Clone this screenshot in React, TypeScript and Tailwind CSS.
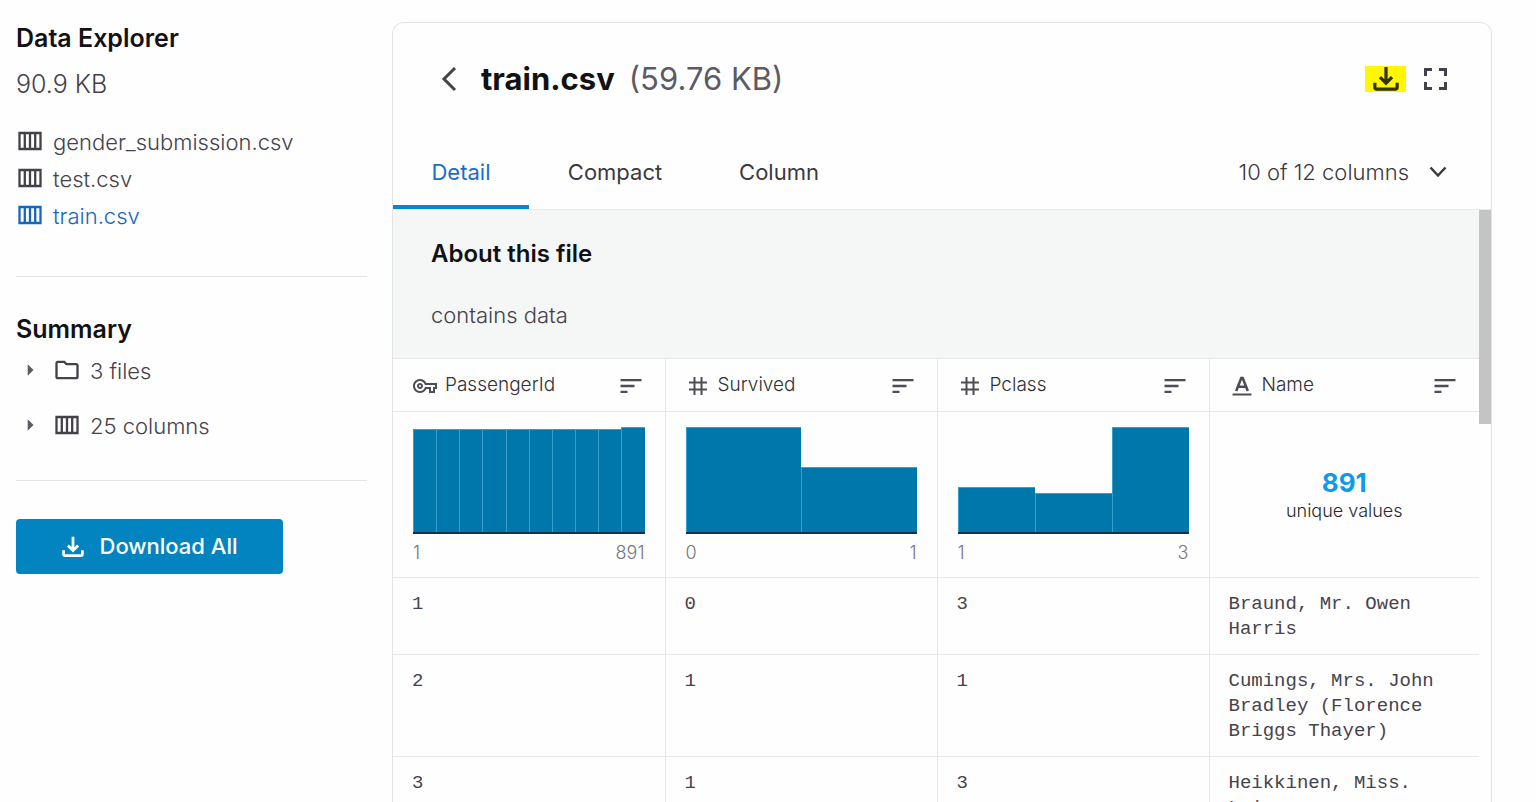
import type { ReactNode } from "react";
import { MdArrowRight, MdOutlineFolder, MdOutlineVpnKey, MdSort } from "react-icons/md";

function ColumnsIcon() {
  return (
    <svg viewBox="0 0 24 20" className="mb-1 h-5 w-6 shrink-0" fill="none" stroke="currentColor" strokeWidth="2.300" aria-hidden="true">
      <path d="M1.500 2h21v16h-21zM6.800 2v16M12 2v16M17.200 2v16" />
    </svg>
  );
}

function DownloadIcon({ className }: { className: string }) {
  return (
    <svg viewBox="0 0 28 28" className={className} fill="none" stroke="currentColor" strokeWidth="3.500" aria-hidden="true">
      <path d="M14 1v17M7.500 12l6.500 6.500 6.500-6.500M2 18v5q0 2 2 2h20q2 0 2-2V18" />
    </svg>
  );
}

function HashIcon() {
  return (
    <svg viewBox="0 0 20 20" className="h-5 w-5" fill="none" stroke="currentColor" strokeWidth="2" aria-hidden="true">
      <path d="M6.500 1v18M13.500 1v18M1 6.500h18M1 13.500h18" />
    </svg>
  );
}

function LetterIcon() {
  return (
    <svg viewBox="0 0 20 20" className="h-5 w-5" fill="none" stroke="currentColor" aria-hidden="true">
      <path d="M4.200 15 9.300 2h1.400l5.100 13M6 10.800h8" strokeWidth="2.600" />
      <path d="M.5 18.500h19" strokeWidth="2" />
    </svg>
  );
}

type Column = { name: string; icon: ReactNode; bars?: number[]; min?: string; max?: string };

const columns: Column[] = [
  {
    name: "PassengerId",
    icon: <MdOutlineVpnKey className="h-6 w-6" />,
    bars: [98, 98, 98, 98, 98, 98, 98, 98, 98, 100],
    min: "1",
    max: "891",
  },
  { name: "Survived", icon: <HashIcon />, bars: [100, 62], min: "0", max: "1" },
  { name: "Pclass", icon: <HashIcon />, bars: [43, 37, 100], min: "1", max: "3" },
  { name: "Name", icon: <LetterIcon /> },
];

const rows = [
  ["1", "0", "3", "Braund, Mr. Owen Harris"],
  ["2", "1", "1", "Cumings, Mrs. John Bradley (Florence Briggs Thayer)"],
  ["3", "1", "3", "Heikkinen, Miss. Laina"],
];

const files = ["gender_submission.csv", "test.csv", "train.csv"];

function Histogram({ column }: { column: Column }) {
  return (
    <div>
      <div className="flex h-[107px] items-end border-b-2 border-[#14304a]">
        {column.bars?.map((height, i) => (
          <div
            key={i}
            className="flex-1 border-t border-l border-[#3b9dca] bg-[#0077ab]"
            style={{ height: `${height}%` }}
          />
        ))}
      </div>
      <div className="mt-[7px] flex justify-between text-lg leading-6 font-light text-[#77757c]">
        <span>{column.min}</span>
        <span>{column.max}</span>
      </div>
    </div>
  );
}

export default function App() {
  return (
    <div className="flex h-screen gap-[25px] overflow-hidden bg-[#fefefe] pt-[22px] pr-11 pl-4 font-['Inter',sans-serif] text-[#44414a]">
      <aside className="w-[351px] shrink-0">
        <h2 className="text-[25px] leading-8 font-semibold text-[#121214]">Data Explorer</h2>
        <p className="mt-[14px] text-[25px] leading-8 font-light">90.9 KB</p>
        <nav className="mt-6 border-b border-[#e3e4e6] pb-[41px]">
          {files.map((file) => (
            <a
              key={file}
              href={"#" + file}
              className={`flex h-[37px] items-center gap-[11px] px-[2px] text-[22px] font-light ${file === "train.csv" ? "text-[#1766bd]" : ""}`}
            >
              <ColumnsIcon />
              {file}
            </a>
          ))}
        </nav>
        <section className="border-b border-[#e3e4e6] pb-[26px]">
          <h2 className="mt-9 text-[25px] leading-8 font-semibold text-[#121214]">Summary</h2>
          <button className="-mt-px flex h-[55px] w-full items-center text-[22px] font-light">
            <MdArrowRight className="mb-1 h-7 w-7 text-[#5c5a62]" />
            <MdOutlineFolder className="mr-[9px] mb-1 ml-[9px] h-7 w-7" />3 files
          </button>
          <button className="flex h-[55px] w-full items-center text-[22px] font-light">
            <MdArrowRight className="mr-[11px] mb-1 h-7 w-7 text-[#5c5a62]" />
            <ColumnsIcon />
            <span className="ml-[11px]">25 columns</span>
          </button>
        </section>
        <button className="mt-[38px] flex h-[55px] w-[267px] items-center justify-center gap-4 rounded bg-[#0284c0] text-[22px] font-medium text-white">
          <DownloadIcon className="h-[22px] w-[22px]" />
          Download All
        </button>
      </aside>

      <main className="flex min-w-0 flex-1 flex-col rounded-t-xl border border-b-0 border-[#e3e4e6]">
        <header className="flex h-28 shrink-0 items-center pr-11 pl-12">
          <button aria-label="Back">
            <svg viewBox="0 0 16 26" className="h-[26px] w-4" fill="none" stroke="currentColor" strokeWidth="3" aria-hidden="true">
              <path d="M14 2 3 13l11 11" />
            </svg>
          </button>
          <h1 className="ml-6 text-[31px] font-bold text-[#121214]">train.csv</h1>
          <span className="ml-[14px] text-[31px] text-[#5c5a62]">(59.76 KB)</span>
          <div className="ml-auto flex items-center gap-[18px]">
            <button aria-label="Download" className="flex h-[26px] w-[41px] items-center justify-center bg-[#fff700] text-[#34320d]">
              <DownloadIcon className="h-[26px] w-[26px]" />
            </button>
            <button aria-label="Full screen">
              <svg viewBox="0 0 23 22" className="h-[22px] w-[23px]" fill="none" stroke="currentColor" strokeWidth="3" aria-hidden="true">
                <path d="M1.500 8V1.500H8M15 1.500h6.500V8M21.500 14v6.500H15M8 20.500H1.500V14" />
              </svg>
            </button>
          </div>
        </header>

        <div className="flex h-[75px] shrink-0 border-b border-[#e9eaeb] text-[22px] text-[#3b383f]">
          <button className="w-[136px] rounded-t border-b-4 border-[#0a84d8] pt-1 text-[#1a6dc8]">Detail</button>
          <button className="w-[172px]">Compact</button>
          <button className="w-[156px]">Column</button>
          <button className="ml-auto flex items-center gap-5 pr-11 font-light">
            10 of 12 columns
            <svg viewBox="0 0 18 12" className="h-3 w-[18px]" fill="none" stroke="currentColor" strokeWidth="2.500" aria-hidden="true">
              <path d="m1.500 1.500 7.500 8 7.500-8" />
            </svg>
          </button>
        </div>

        <div className="flex min-h-0 flex-1">
          <div className="min-w-0 flex-1 overflow-hidden">
            <section className="h-[148px] bg-[#f5f6f6] px-[38px] pt-7">
              <h2 className="text-2xl leading-8 font-semibold text-[#121214]">About this file</h2>
              <p className="mt-[30px] text-[22px] leading-[30px] font-light">contains data</p>
            </section>
            <table className="w-full table-fixed border-collapse text-left">
              <thead>
                <tr>
                  {columns.map((column) => (
                    <th
                      key={column.name}
                      className="h-[53px] w-[272px] border-y border-r border-[#e6e7e9] px-5 font-light last:w-auto last:border-r-0"
                    >
                      <div className="flex items-center gap-2 pt-px text-[19px] text-[#313036]">
                        <span className="flex w-6 justify-center text-[#4e4c57]">{column.icon}</span>
                        {column.name}
                        <button className="ml-auto" aria-label={"Sort by " + column.name}>
                          <MdSort className="h-7 w-7 text-[#4e4c57]" />
                        </button>
                      </div>
                    </th>
                  ))}
                </tr>
              </thead>
              <tbody>
                <tr>
                  {columns.map((column) => (
                    <td key={column.name} className="h-[166px] border-r border-b border-[#e6e7e9] px-5 pt-[15px] align-top last:border-r-0">
                      {column.bars ? (
                        <Histogram column={column} />
                      ) : (
                        <div className="pt-10 text-center">
                          <div className="text-[26px] leading-8 font-bold text-[#0e9be9]">891</div>
                          <div className="text-lg leading-6 font-light text-[#29282d]">unique values</div>
                        </div>
                      )}
                    </td>
                  ))}
                </tr>
                {rows.map((row) => (
                  <tr key={row[0]}>
                    {row.map((value, i) => (
                      <td
                        key={i}
                        className="border-r border-b border-[#e6e7e9] px-[19px] pt-[14px] pb-3 align-top font-['Liberation_Mono',monospace] text-[19px] leading-[25px] text-[#46434b] last:border-r-0"
                      >
                        {value}
                      </td>
                    ))}
                  </tr>
                ))}
              </tbody>
            </table>
          </div>
          <div className="w-3 shrink-0">
            <div className="h-[214px] bg-[#c4c4c4]" />
          </div>
        </div>
      </main>
    </div>
  );
}
